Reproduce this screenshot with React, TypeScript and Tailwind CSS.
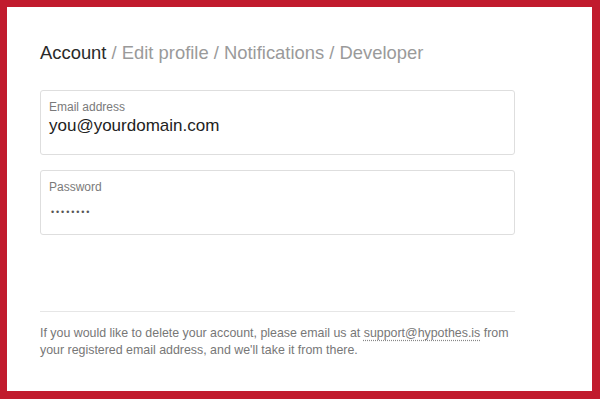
export default function App() {
  return (
    <div
      className="h-[399px] w-[600px] bg-[#c11b2d] pb-[8px] pl-[7px] pr-[8px] pt-[7px]"
      style={{ fontFamily: '"Liberation Sans", Arial, sans-serif' }}
    >
      <div className="h-full w-full bg-white pl-[33px] pt-[35px]">
        <div className="w-[475px]">
          <h1 className="text-[18.4px] leading-[22px] text-[#9a9a9a]">
            <span className="text-[#2a2a2a]">Account</span> / Edit profile / Notifications / Developer
          </h1>

          <div className="mt-[26px] flex flex-col gap-[15px]">
            <div className="h-[65px] rounded-[3px] border border-[#dedede] px-[8px] pt-[9px]">
              <div className="text-[12px] leading-[14px] text-[#7a7a7a]">Email address</div>
              <div className="mt-[2px] text-[17px] leading-[20px] text-[#222]">you@yourdomain.com</div>
            </div>
            <div className="h-[65px] rounded-[3px] border border-[#dedede] px-[8px] pt-[9px]">
              <div className="text-[12px] leading-[14px] text-[#7a7a7a]">Password</div>
              <div className="mt-[11px] pl-[2px] text-[9px] leading-[14px] tracking-[1.9px] text-[#555]">••••••••</div>
            </div>
          </div>

          <hr className="mt-[76px] border-t border-[#e6e6e6]" />

          <p className="mt-[13px] text-[12.4px] leading-[17px] text-[#777]">
            If you would like to delete your account, please email us at{" "}
            <span className="underline decoration-[#888] decoration-dotted underline-offset-[3px]">support@hypothes.is</span>{" "}
            from your registered email address, and we'll take it from there.
          </p>
        </div>
      </div>
    </div>
  );
}
